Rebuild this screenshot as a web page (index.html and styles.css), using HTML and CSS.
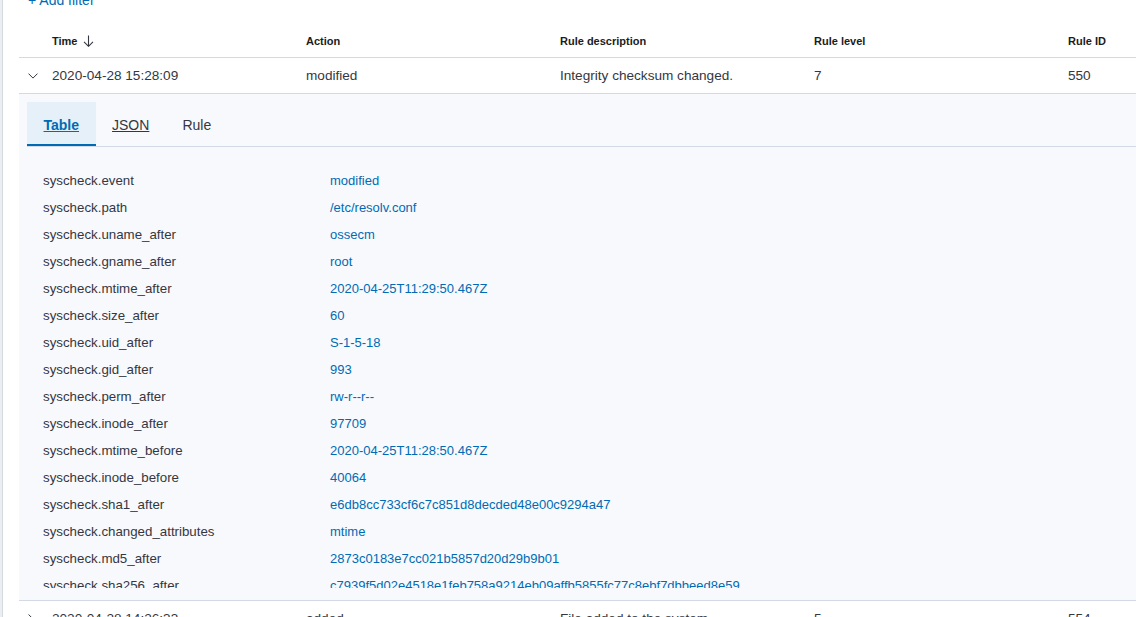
FILE: index.html
```html
<!DOCTYPE html>
<html>
<head>
<meta charset="utf-8">
<link rel="stylesheet" href="styles.css">
</head>
<body>
<div class="strip"></div>
<main class="main">
  <div class="filterbar"><a class="addfilter">+ Add filter</a></div>
  <div class="table">
    <div class="row head">
      <div class="cell toggle"></div>
      <div class="cell">Time <svg class="sort" width="11" height="12" viewBox="0 0 11 12"><path d="M5.5 0.5V11.3M1 6.8L5.5 11.3L10 6.8" fill="none" stroke="#343741" stroke-width="1.1"/></svg></div>
      <div class="cell">Action</div>
      <div class="cell">Rule description</div>
      <div class="cell">Rule level</div>
      <div class="cell">Rule ID</div>
    </div>
    <div class="row data">
      <div class="cell toggle"><svg width="10" height="6" viewBox="0 0 10 6"><path d="M0.5 0.6L5 5.1L9.5 0.6" fill="none" stroke="#343741" stroke-width="1"/></svg></div>
      <div class="cell">2020-04-28 15:28:09</div>
      <div class="cell">modified</div>
      <div class="cell">Integrity checksum changed.</div>
      <div class="cell">7</div>
      <div class="cell">550</div>
    </div>
    <div class="panel">
      <div class="tabs">
        <div class="tab selected">Table</div>
        <div class="tab ul">JSON</div>
        <div class="tab">Rule</div>
      </div>
      <div class="details">
        <div class="drow"><span class="key">syscheck.event</span><span class="val">modified</span></div>
        <div class="drow"><span class="key">syscheck.path</span><span class="val">/etc/resolv.conf</span></div>
        <div class="drow"><span class="key">syscheck.uname_after</span><span class="val">ossecm</span></div>
        <div class="drow"><span class="key">syscheck.gname_after</span><span class="val">root</span></div>
        <div class="drow"><span class="key">syscheck.mtime_after</span><span class="val">2020-04-25T11:29:50.467Z</span></div>
        <div class="drow"><span class="key">syscheck.size_after</span><span class="val">60</span></div>
        <div class="drow"><span class="key">syscheck.uid_after</span><span class="val">S-1-5-18</span></div>
        <div class="drow"><span class="key">syscheck.gid_after</span><span class="val">993</span></div>
        <div class="drow"><span class="key">syscheck.perm_after</span><span class="val">rw-r--r--</span></div>
        <div class="drow"><span class="key">syscheck.inode_after</span><span class="val">97709</span></div>
        <div class="drow"><span class="key">syscheck.mtime_before</span><span class="val">2020-04-25T11:28:50.467Z</span></div>
        <div class="drow"><span class="key">syscheck.inode_before</span><span class="val">40064</span></div>
        <div class="drow"><span class="key">syscheck.sha1_after</span><span class="val">e6db8cc733cf6c7c851d8decded48e00c9294a47</span></div>
        <div class="drow"><span class="key">syscheck.changed_attributes</span><span class="val">mtime</span></div>
        <div class="drow"><span class="key">syscheck.md5_after</span><span class="val">2873c0183e7cc021b5857d20d29b9b01</span></div>
        <div class="drow"><span class="key">syscheck.sha256_after</span><span class="val">c7939f5d02e4518e1feb758a9214eb09affb5855fc77c8ebf7dbbeed8e59</span></div>
        <div class="drow"><span class="key">syscheck.sha256_before</span><span class="val">-</span></div>
      </div>
    </div>
    <div class="row data">
      <div class="cell toggle"><svg width="6" height="10" viewBox="0 0 6 10"><path d="M0.6 0.5L5.1 5L0.6 9.5" fill="none" stroke="#343741" stroke-width="1"/></svg></div>
      <div class="cell">2020-04-28 14:26:33</div>
      <div class="cell">added</div>
      <div class="cell">File added to the system.</div>
      <div class="cell">5</div>
      <div class="cell">554</div>
    </div>
  </div>
</main>
</body>
</html>
```

FILE: styles.css
```css
html, body {
  margin: 0;
  padding: 0;
  height: 617px;
  overflow: hidden;
  background: #ffffff;
}
body {
  display: flex;
  font-family: "Liberation Sans", Arial, sans-serif;
  color: #343741;
}
.strip {
  flex: 0 0 2px;
  background: #eceef2;
  border-right: 1px solid #d5d9e0;
}
.main {
  flex: 1 1 auto;
  min-width: 0;
  padding-left: 16px;
  overflow: hidden;
}
.filterbar {
  height: 16px;
  margin-top: -8px;
  line-height: 16px;
  padding-left: 9px;
}
.addfilter {
  font-size: 14px;
  color: #006bb4;
}
.table {
  margin-top: 17px;
  width: 1300px;
}
.row {
  display: grid;
  grid-template-columns: 25px repeat(5, 254px);
  align-items: center;
  border-bottom: 1px solid #d3dae6;
}
.row.head {
  height: 32px;
  font-size: 11px;
  font-weight: bold;
  color: #1a1c21;
}
.row.data {
  height: 35px;
  font-size: 13.6px;
}
.cell {
  padding-left: 8px;
  display: flex;
  align-items: center;
  white-space: nowrap;
}
.cell.toggle {
  padding-left: 9px;
}
.sort {
  margin-left: 6px;
}
.panel {
  background: #f8f9fc;
  padding: 8px 0 10px 8px;
  border-bottom: 1px solid #d3dae6;
}
.tabs {
  display: flex;
  border-bottom: 1px solid #d3dae6;
  width: 1109px;
}
.tab {
  height: 44px;
  line-height: 46px;
  padding: 0 16.5px;
  font-size: 14px;
  color: #343741;
}
.tab.ul {
  text-decoration: underline;
}
.tab.selected {
  background: #e6f0f8;
  color: #006bb4;
  font-weight: bold;
  text-decoration: underline;
  box-shadow: inset 0 -2px 0 #006bb4;
}
.details {
  height: 441px;
  margin-bottom: 2px;
  overflow: hidden;
  box-sizing: border-box;
  padding: 20px 0 0 16px;
}
.drow {
  display: grid;
  grid-template-columns: 287px auto;
  height: 27px;
  align-items: center;
  white-space: nowrap;
}
.key {
  font-size: 13.3px;
  color: #343741;
}
.val {
  font-size: 13px;
  color: #006bb4;
}
```
